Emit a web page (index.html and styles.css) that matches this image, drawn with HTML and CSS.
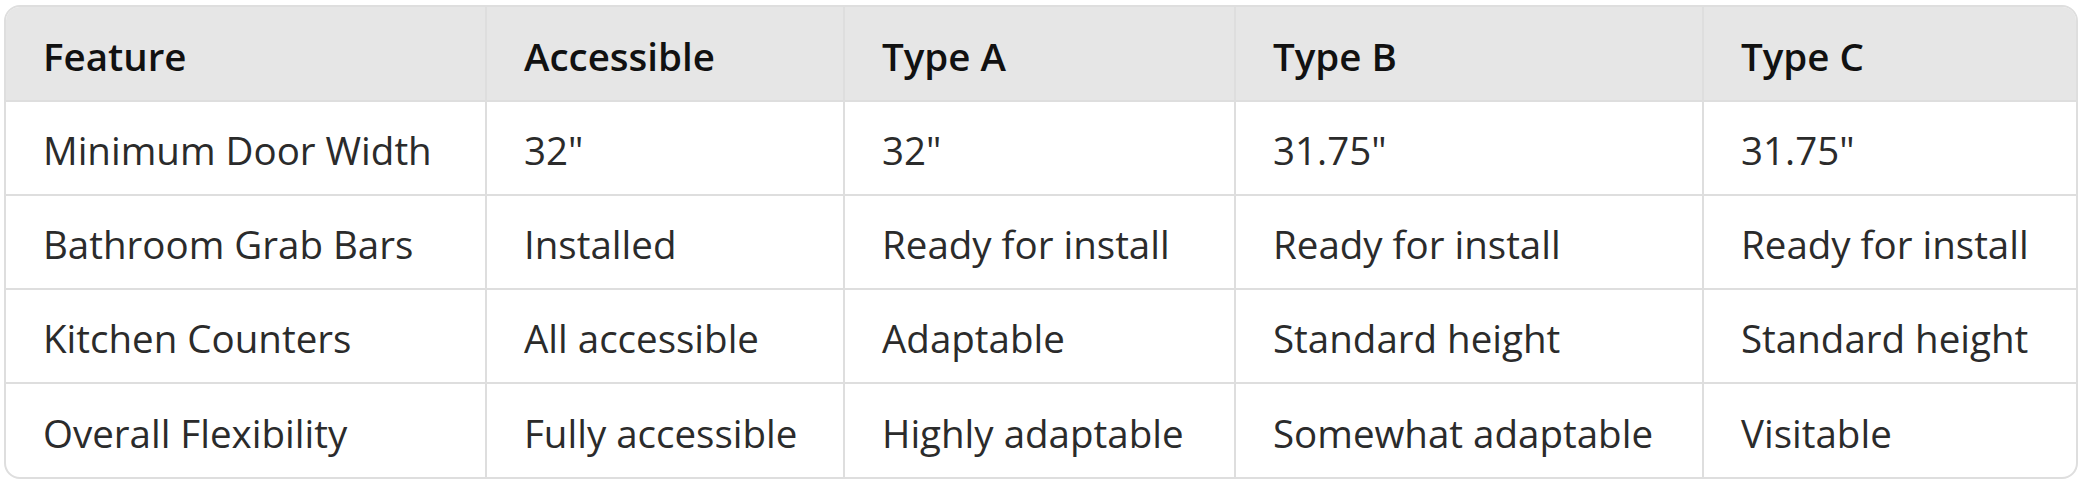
FILE: index.html
```html
<!DOCTYPE html>
<html lang="en">
<head>
<meta charset="utf-8">
<title>Housing types comparison</title>
<link rel="stylesheet" href="styles.css">
</head>
<body>
<div class="table-wrap">
  <table class="compare">
    <colgroup>
      <col class="c1"><col class="c2"><col class="c3"><col class="c4"><col class="c5">
    </colgroup>
    <thead>
      <tr>
        <th>Feature</th>
        <th>Accessible</th>
        <th>Type A</th>
        <th>Type B</th>
        <th>Type C</th>
      </tr>
    </thead>
    <tbody>
      <tr>
        <td>Minimum Door Width</td>
        <td>32"</td>
        <td>32"</td>
        <td>31.75"</td>
        <td>31.75"</td>
      </tr>
      <tr>
        <td>Bathroom Grab Bars</td>
        <td>Installed</td>
        <td>Ready for install</td>
        <td>Ready for install</td>
        <td>Ready for install</td>
      </tr>
      <tr>
        <td>Kitchen Counters</td>
        <td>All accessible</td>
        <td>Adaptable</td>
        <td>Standard height</td>
        <td>Standard height</td>
      </tr>
      <tr>
        <td>Overall Flexibility</td>
        <td>Fully accessible</td>
        <td>Highly adaptable</td>
        <td>Somewhat adaptable</td>
        <td>Visitable</td>
      </tr>
    </tbody>
  </table>
</div>
</body>
</html>
```

FILE: styles.css
```css
html, body {
  margin: 0;
  padding: 0;
  background: #ffffff;
}

body {
  padding: 5px 4px 0 4px;
  font-family: "Open Sans", "Noto Sans", "Liberation Sans", sans-serif;
  color: #2b2b2b;
}

.table-wrap {
  width: 2074px;
  box-sizing: border-box;
  border: 2px solid #dedede;
  border-radius: 16px;
  overflow: hidden;
}

.compare {
  width: 100%;
  border-collapse: collapse;
  table-layout: fixed;
  font-size: 38.5px;
}

.c1 { width: 480px; }
.c2 { width: 358px; }
.c3 { width: 391px; }
.c4 { width: 468px; }
.c5 { width: 373px; }

.compare th,
.compare td {
  text-align: left;
  padding: 4px 6px 0 37px;
  border-left: 2px solid #dedede;
  border-top: 2px solid #dedede;
  white-space: nowrap;
  vertical-align: middle;
}

.compare th:first-child,
.compare td:first-child {
  border-left: none;
}

.compare thead tr {
  height: 94px;
  background: #e6e6e6;
}

.compare thead th {
  border-top: none;
  font-weight: 600;
  color: #111111;
}

.compare tbody tr {
  height: 94px;
}
```
